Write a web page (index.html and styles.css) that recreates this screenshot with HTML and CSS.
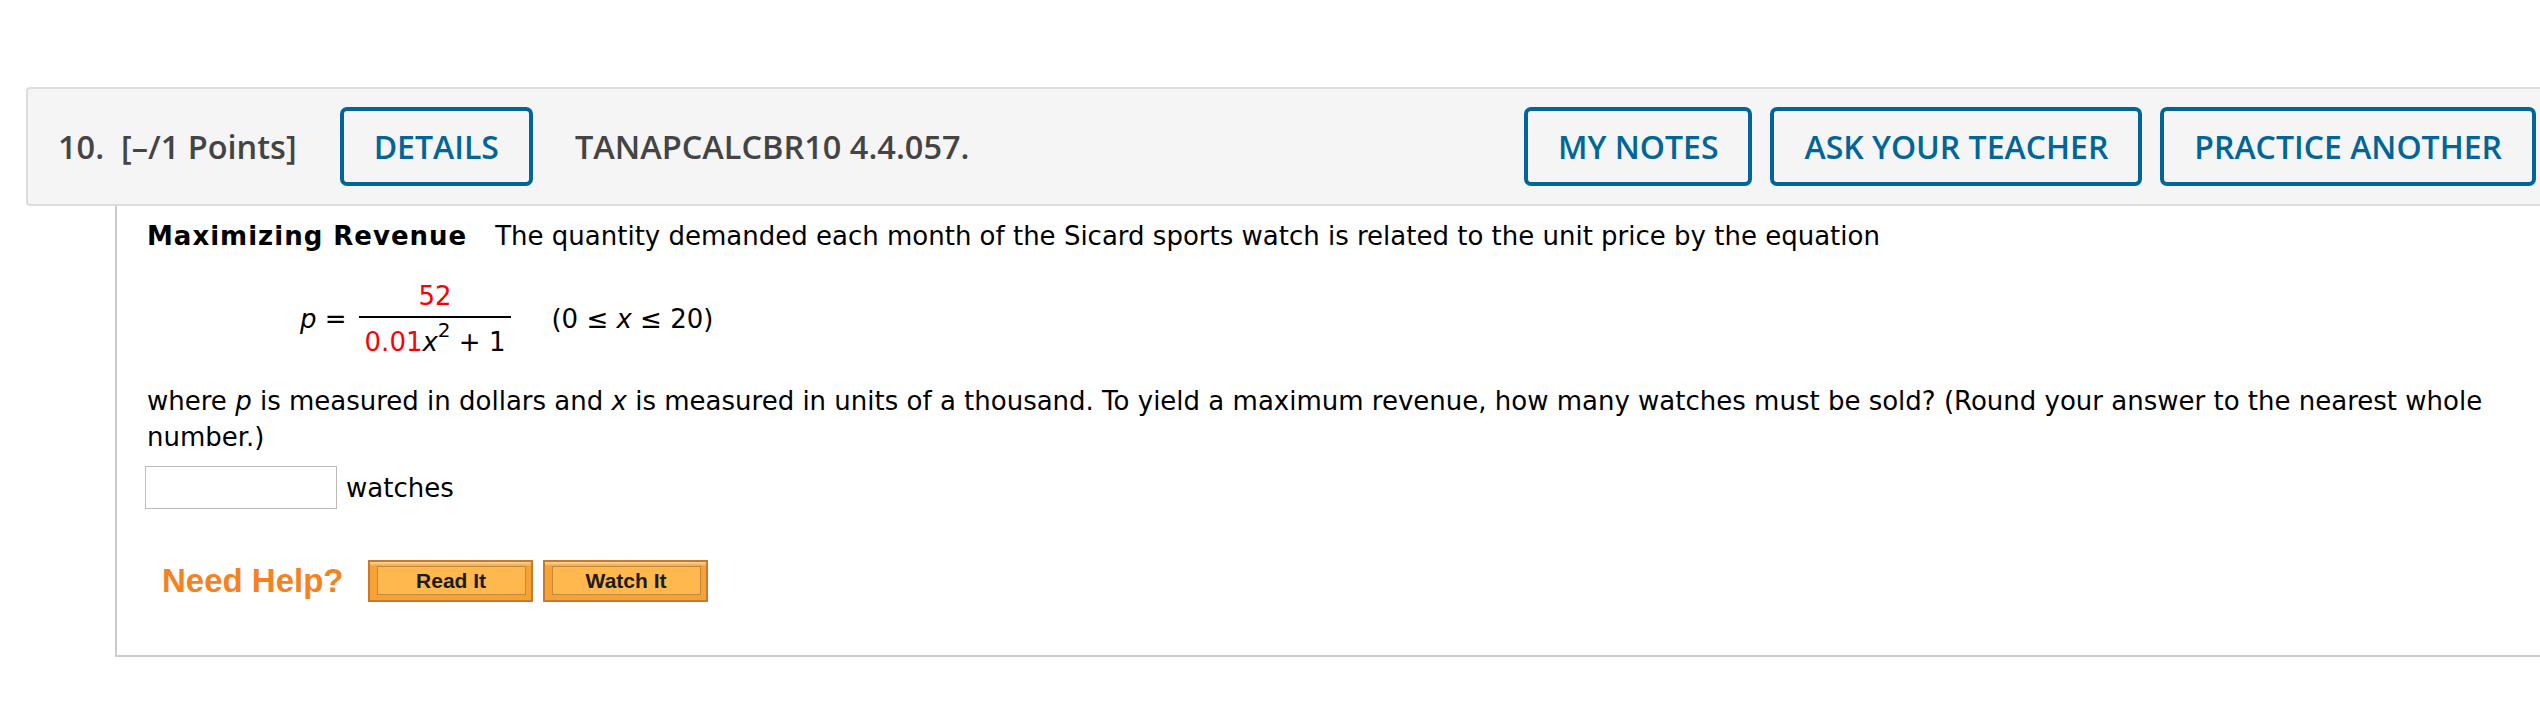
FILE: index.html
```html
<!DOCTYPE html>
<html lang="en">
<head>
    <meta charset="UTF-8">
    <title>Question 10 - TANAPCALCBR10 4.4.057</title>
    <link rel="stylesheet" href="styles.css">
</head>
<body>
    <div class="page">
        <div class="question">
            <div class="q-head">
                <span class="q-num">10.</span>
                <span class="q-points">[&ndash;/1 Points]</span>
                <button class="outline-btn details-btn">DETAILS</button>
                <span class="q-code">TANAPCALCBR10 4.4.057.</span>
                <div class="head-actions">
                    <button class="outline-btn">MY NOTES</button>
                    <button class="outline-btn">ASK YOUR TEACHER</button>
                    <button class="outline-btn">PRACTICE ANOTHER</button>
                </div>
            </div>
            <div class="q-body">
                <p class="q-text"><strong class="q-title">Maximizing Revenue</strong>The quantity demanded each month of the Sicard sports watch is related to the unit price by the equation</p>
                <div class="formula">
                    <span class="lhs"><i>p</i> =</span>
                    <span class="frac">
                        <span class="num"><span class="hl">52</span></span>
                        <span class="den"><span class="hl">0.01</span><i>x</i><sup>2</sup> + 1</span>
                    </span>
                    <span class="domain">(0 &le; <i>x</i> &le; 20)</span>
                </div>
                <p class="q-text">where <i>p</i> is measured in dollars and <i>x</i> is measured in units of a thousand. To yield a maximum revenue, how many watches must be sold? (Round your answer to the nearest whole number.)</p>
                <div class="answer-row">
                    <input type="text" class="answer-box">
                    <span class="unit">watches</span>
                </div>
                <div class="help-row">
                    <span class="need-help">Need Help?</span>
                    <button class="help-btn"><span>Read It</span></button>
                    <button class="help-btn"><span>Watch It</span></button>
                </div>
            </div>
        </div>
    </div>
</body>
</html>
```

FILE: styles.css
```css
body {
    margin: 0;
    background: #fff;
}
.page {
    overflow: hidden;
    height: 704px;
}
.question {
    padding-top: 87px;
}
.q-head {
    display: flex;
    align-items: center;
    height: 115px;
    margin-left: 26px;
    margin-right: -20px;
    padding: 0 22px 0 30px;
    background: #f5f5f5;
    border: 2px solid #ddd;
    border-radius: 4px;
    font-family: 'Open Sans', sans-serif;
    font-weight: 600;
    font-size: 32.5px;
    color: #444;
}
.q-num {
    margin-right: 17px;
}
.q-points {
    margin-right: 43px;
}
.q-code {
    margin-left: 42px;
}
.outline-btn {
    height: 79px;
    padding: 0 30px;
    background: #f5f5f5;
    border: 4px solid #006699;
    border-radius: 7px;
    font-family: 'Open Sans', sans-serif;
    font-weight: 600;
    font-size: 32px;
    color: #006699;
    cursor: pointer;
}
.head-actions {
    display: flex;
    gap: 18px;
    margin-left: auto;
}
.q-body {
    margin-left: 115px;
    margin-right: -20px;
    padding: 12px 0 53px 30px;
    border-left: 2px solid #ccc;
    border-bottom: 2px solid #ccc;
    font-family: 'DejaVu Sans', Verdana, sans-serif;
    font-size: 26px;
    line-height: 36px;
    color: #000;
}
.q-text {
    margin: 0;
    padding-right: 60px;
}
.q-title {
    margin-right: 28px;
    letter-spacing: 1px;
}
.formula {
    display: flex;
    align-items: center;
    margin: 28px 0 27px 153px;
}
.lhs {
    margin-right: 12px;
}
.frac {
    display: flex;
    flex-direction: column;
    align-items: center;
    line-height: 28px;
}
.num {
    padding: 0 6px 6px;
    border-bottom: 2px solid #000;
    align-self: stretch;
    text-align: center;
}
.den {
    padding: 10px 6px 0;
}
.den sup {
    position: relative;
    top: -4px;
    font-size: 20px;
    line-height: 0;
}
.hl {
    color: #f00;
}
.domain {
    margin-left: 40px;
}
.answer-row {
    display: flex;
    align-items: center;
    gap: 9px;
    margin-top: 11px;
}
.answer-box {
    width: 192px;
    height: 43px;
    box-sizing: border-box;
    margin-left: -2px;
    border: 1px solid #bbb;
    border-radius: 0;
}
.help-row {
    display: flex;
    align-items: center;
    margin-top: 51px;
    padding-left: 15px;
}
.need-help {
    margin-right: 24px;
    font-family: 'Liberation Sans', Arial, sans-serif;
    font-weight: bold;
    font-size: 33px;
    color: #f5821f;
}
.help-btn {
    width: 165px;
    height: 42px;
    margin-right: 10px;
    padding: 4px 5px 5px 7px;
    background: linear-gradient(#fcd9a3 0, #f7a234 4px, #f7a234 100%);
    border: 2px solid #c67a2f;
    cursor: pointer;
}
.help-btn span {
    display: flex;
    align-items: center;
    justify-content: center;
    height: 100%;
    box-sizing: border-box;
    background: #ffb84d;
    border: 1px solid #c28a41;
    font-family: 'Liberation Sans', Arial, sans-serif;
    font-weight: bold;
    font-size: 21px;
    color: #1c1c1c;
}
```
